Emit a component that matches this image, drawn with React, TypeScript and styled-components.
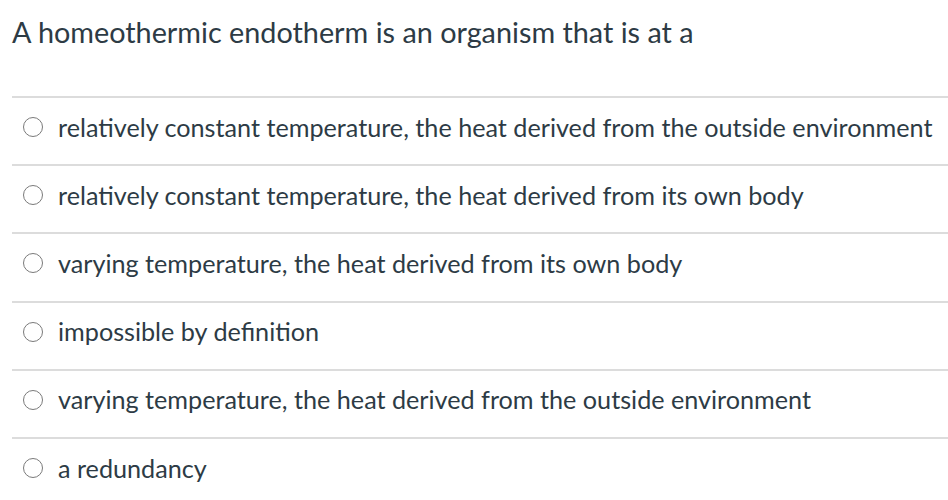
import React from 'react';
import styled, { createGlobalStyle } from 'styled-components';

const GlobalStyle = createGlobalStyle`
  html, body {
    margin: 0;
    padding: 0;
    background: #ffffff;
  }
  body {
    font-family: Lato, "Open Sans", sans-serif;
    color: #2d3b45;
  }
`;

const answers = [
  'relatively constant temperature, the heat derived from the outside environment',
  'relatively constant temperature, the heat derived from its own body',
  'varying temperature, the heat derived from its own body',
  'impossible by definition',
  'varying temperature, the heat derived from the outside environment',
  'a redundancy',
];

export default function App() {
  return (
    <>
      <GlobalStyle />
      <Question>
        <Prompt>A homeothermic endotherm is an organism that is at a</Prompt>
        <AnswerList>
          {answers.map((text) => (
            <Answer key={text}>
              <Radio type="radio" name="answer" />
              <AnswerText>{text}</AnswerText>
            </Answer>
          ))}
        </AnswerList>
      </Question>
    </>
  );
}

const Question = styled.div`
  padding: 0 0 0 12px;
  height: 500px;
  overflow: hidden;
`;

const Prompt = styled.h1`
  margin: 0;
  padding: 15px 0 0 0;
  font-size: 28.8px;
  font-weight: 400;
  line-height: 35px;
  height: 81px;
`;

const AnswerList = styled.div`
  display: flex;
  flex-direction: column;
`;

const Answer = styled.label`
  display: flex;
  align-items: center;
  height: 57.2px;
  border-top: 2px solid #dcdcdc;
  padding: 0 0 9px 11px;
`;

const Radio = styled.input`
  appearance: none;
  width: 20px;
  height: 20px;
  margin: 1px 15px 0 0;
  border: 1.5px solid #7a7a7a;
  border-radius: 50%;
  background: #fff;
  box-sizing: border-box;
  flex-shrink: 0;
`;

const AnswerText = styled.span`
  font-size: 25.2px;
  line-height: 30px;
  white-space: nowrap;
`;
